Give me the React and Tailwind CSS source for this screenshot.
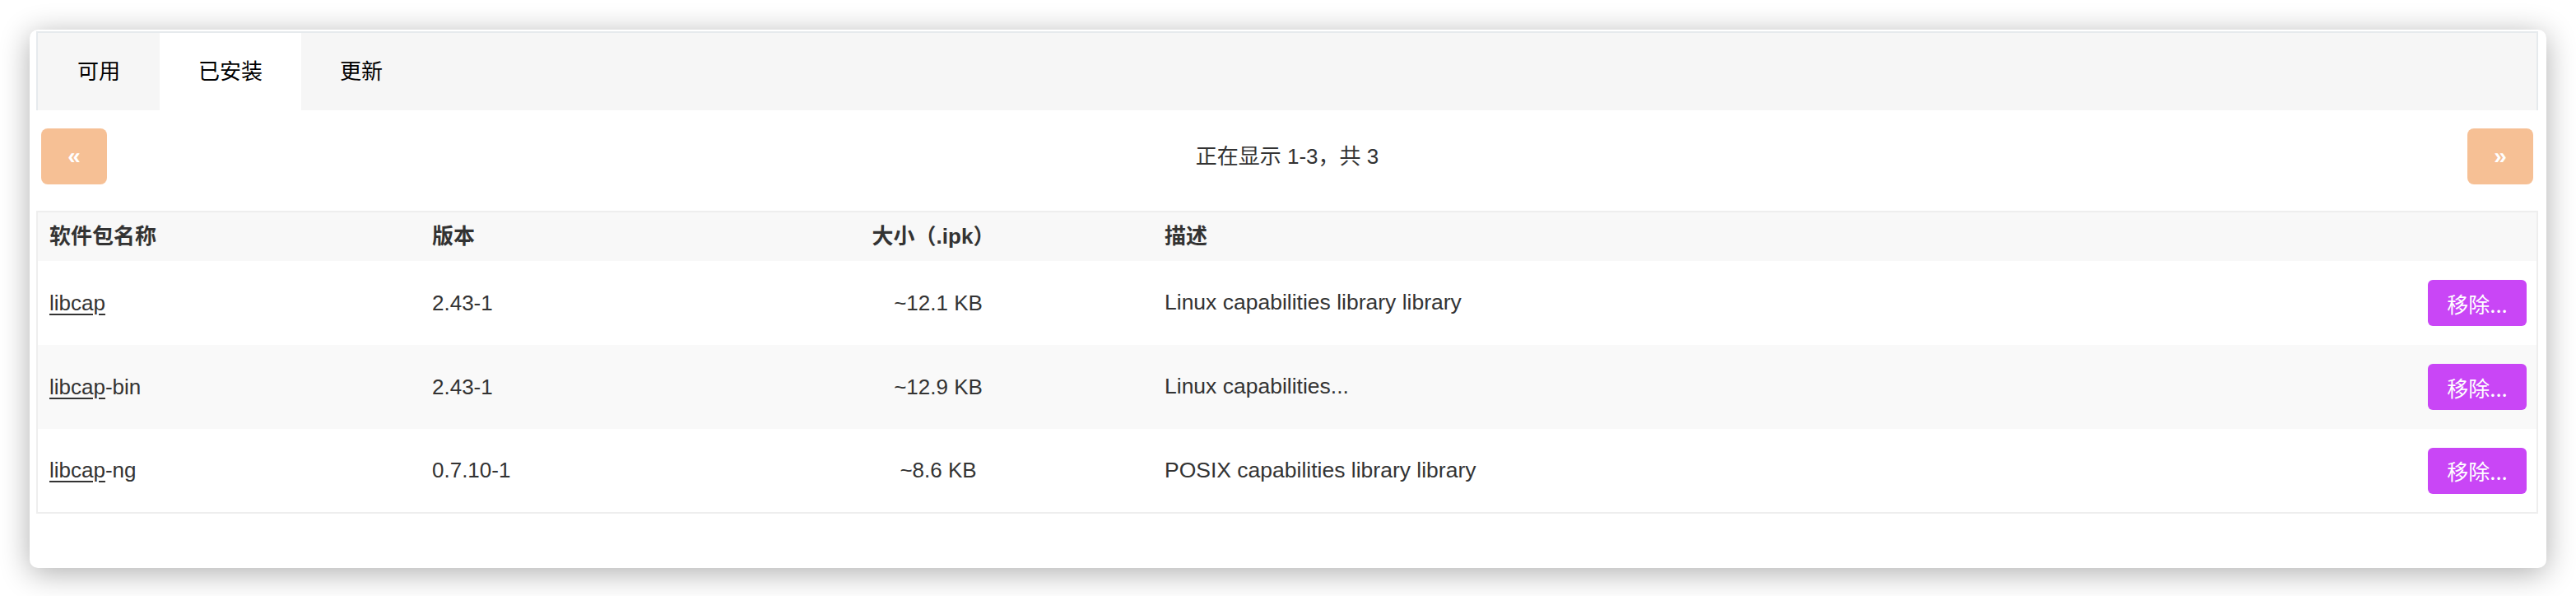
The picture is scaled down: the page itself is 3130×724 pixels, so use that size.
import React from "react";

const rows = [
  { name: "libcap", suffix: "", ver: "2.43-1", size: "~12.1 KB", desc: "Linux capabilities library library", alt: false },
  { name: "libcap", suffix: "-bin", ver: "2.43-1", size: "~12.9 KB", desc: "Linux capabilities...", alt: true },
  { name: "libcap", suffix: "-ng", ver: "0.7.10-1", size: "~8.6 KB", desc: "POSIX capabilities library library", alt: false },
];

export default function App() {
  return (
    <div className="w-[3130px] h-[724px] bg-white pt-[36px] px-[36px] font-['Liberation_Sans','Noto_Sans_CJK_SC',sans-serif] text-[26px] text-[#333333]">
      <div className="h-[654px] rounded-[10px] bg-white pt-[2px] pl-[8px] pr-[10px] pb-[64px] shadow-[0_6px_36px_rgba(0,0,0,0.32)]">
        {/* tabs */}
        <div className="flex h-[96px] bg-[#f6f6f6] border-t-2 border-x-2 border-[#e6eaed]">
          <div className="flex items-center px-[48px] text-black">可用</div>
          <div className="flex items-center px-[47px] bg-white text-black">已安装</div>
          <div className="flex items-center px-[47px] text-black">更新</div>
        </div>

        {/* pager */}
        <div className="flex items-center justify-between px-[6px] mt-[22px] mb-[32px] h-[68px]">
          <button className="w-[80px] h-[68px] rounded-[8px] bg-[#f6c095] text-white text-[28px] font-bold flex items-center justify-center">«</button>
          <div className="text-[#333333]">正在显示 1-3，共 3</div>
          <button className="w-[80px] h-[68px] rounded-[8px] bg-[#f6c095] text-white text-[28px] font-bold flex items-center justify-center">»</button>
        </div>

        {/* table */}
        <table className="w-full table-fixed border-collapse border-2 border-[#eeeeee]">
          <colgroup>
            <col className="w-[464px]" />
            <col className="w-[360px]" />
            <col className="w-[530px]" />
            <col />
            <col className="w-[142px]" />
          </colgroup>
          <thead>
            <tr className="h-[60px] bg-[#f8f8f8] font-bold text-[#333333]">
              <th className="text-left font-bold pl-[14px]">软件包名称</th>
              <th className="text-left font-bold pl-[16px]">版本</th>
              <th className="text-center font-bold">大小（.ipk）</th>
              <th className="text-left font-bold pl-[16px]">描述</th>
              <th></th>
            </tr>
          </thead>
          <tbody>
            {rows.map((r, i) => (
              <tr key={i} className={r.alt ? "h-[102px] bg-[#f9f9f9]" : "h-[102px] bg-white"}>
                <td className="pl-[14px]">
                  <span className="underline underline-offset-[4px] decoration-[2px]">{r.name}</span>
                  {r.suffix}
                </td>
                <td className="pl-[16px]">{r.ver}</td>
                <td className="text-center pl-[12px]">{r.size}</td>
                <td className="pl-[16px] text-[26.5px]">{r.desc}</td>
                <td className="pr-[12px]">
                  <div className="flex justify-end">
                    <button className="w-[120px] h-[56px] rounded-[6px] bg-[#c946f6] text-white text-[26px] flex items-center justify-center font-['Noto_Sans_CJK_SC',sans-serif]">移除...</button>
                  </div>
                </td>
              </tr>
            ))}
          </tbody>
        </table>
      </div>
    </div>
  );
}
